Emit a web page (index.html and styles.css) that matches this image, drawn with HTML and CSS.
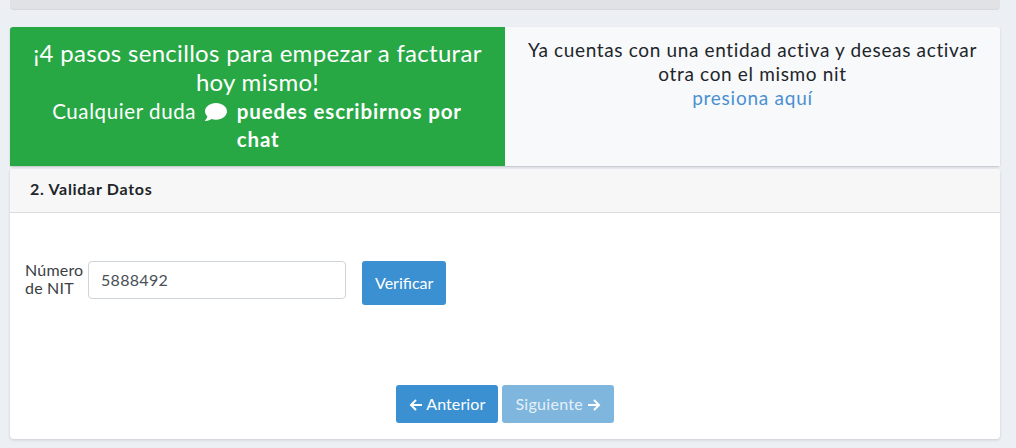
FILE: index.html
```html
<!DOCTYPE html>
<html lang="es">
<head>
<meta charset="utf-8">
<title>Validar Datos</title>
<link rel="stylesheet" href="styles.css">
</head>
<body>
<div class="topbar"></div>
<section class="promo">
  <div class="promo-left">
    <h4 class="promo-title">¡4 pasos sencillos para empezar a facturar hoy mismo!</h4>
    <p class="promo-sub">Cualquier duda
      <svg class="chat-icon" viewBox="0 32 512 448" width="22" height="18" preserveAspectRatio="none" aria-hidden="true"><path fill="#fff" d="M256 32C114.6 32 0 125.1 0 240c0 49.6 21.4 95 57 130.7C44.500 421.100 2.700 466 2.200 466.500c-2.200 2.300-2.800 5.700-1.500 8.700S4.800 480 8 480c66.300 0 116-31.800 140.600-51.400 32.700 12.300 69 19.400 107.400 19.400 141.400 0 256-93.100 256-208S397.400 32 256 32z"/></svg>
      <strong>puedes escribirnos por chat</strong></p>
  </div>
  <div class="promo-right">
    <p class="promo-note">Ya cuentas con una entidad activa y deseas activar otra con el mismo nit</p>
    <a class="promo-link" href="#">presiona aquí</a>
  </div>
</section>
<section class="card">
  <header class="card-header">2. Validar Datos</header>
  <div class="card-body">
    <form class="nit-form">
      <label class="nit-label" for="nit">Número de NIT</label>
      <input class="nit-input" id="nit" type="text" value="5888492">
      <button class="btn verify" type="button">Verificar</button>
    </form>
    <div class="nav-buttons">
      <button class="btn" type="button"><svg class="arrow" viewBox="0 0 14 14" width="14" height="14" aria-hidden="true"><path d="M7 2 2 7l5 5M2 7h11" fill="none" stroke="#fff" stroke-width="2"/></svg> Anterior</button>
      <button class="btn disabled" type="button">Siguiente <svg class="arrow" viewBox="0 0 14 14" width="14" height="14" aria-hidden="true"><path d="m7 2 5 5-5 5M12 7H1" fill="none" stroke="#fff" stroke-width="2"/></svg></button>
    </div>
  </div>
</section>
</body>
</html>
```

FILE: styles.css
```css
* { box-sizing: border-box; }
html, body { margin: 0; height: 448px; overflow: hidden; }
body {
  padding: 0 16px 0 10px;
  background: #ecf0f4;
  font-family: "Lato", "Noto Sans", sans-serif;
  color: #212529;
  font-size: 14px;
}
.topbar {
  height: 10px;
  margin-bottom: 17px;
  background: #e0e2e5;
  border-bottom: 1px solid #d7d9dc;
  border-radius: 0 0 4px 4px;
}
.promo {
  display: grid;
  grid-template-columns: 495px 495px;
  height: 139px;
  border-radius: 3px;
  box-shadow: 0 1px 2px rgba(0,0,0,.2);
}
.promo-left {
  background: #28a745;
  color: #fff;
  text-align: center;
  padding: 11px 15px 0;
  border-radius: 3px 0 0 0;
}
.promo-title {
  margin: 0;
  font-size: 24px;
  line-height: 29px;
  font-weight: 400;
  letter-spacing: .3px;
}
.promo-sub {
  margin: 1px 0 0;
  font-size: 20.5px;
  line-height: 28px;
  font-weight: 400;
  letter-spacing: .6px;
}
.chat-icon { vertical-align: -2px; margin: 0 4px 0 3px; }
.promo-sub strong {
  display: inline-block;
  width: 226px;
  vertical-align: top;
  text-align: left;
  font-weight: 700;
  letter-spacing: .85px;
}
.promo-right {
  background: #f8f9fb;
  text-align: center;
  padding: 11px 15px 0;
  font-size: 19px;
  line-height: 24px;
  letter-spacing: .65px;
  border-radius: 0 3px 0 0;
}
.promo-note { margin: 0; }
.promo-link { color: #4a90d1; text-decoration: none; letter-spacing: .75px; }
.card {
  margin-top: 3px;
  height: 270px;
  background: #fff;
  border-radius: 4px;
  box-shadow: 0 1px 3px rgba(0,0,0,.15);
}
.card-header {
  height: 44px;
  padding: 0 20px 5px;
  display: flex;
  align-items: center;
  background: #f7f7f7;
  border-bottom: 1px solid #dcdcdf;
  border-radius: 4px 4px 0 0;
  font-weight: 700;
  font-size: 16px;
  letter-spacing: .7px;
}
.card-body { padding: 48px 15px 0; }
.nit-form { display: flex; align-items: flex-start; }
.nit-label {
  width: 63px;
  line-height: 18px;
  font-size: 16px;
  letter-spacing: .2px;
  color: #3a3f45;
}
.nit-input {
  width: 258px;
  height: 38px;
  padding: 0 12px 2px;
  border: 1px solid #ced4da;
  border-radius: 4px;
  font: 16px "Lato", sans-serif;
  letter-spacing: .3px;
  color: #495057;
  background: #fff;
}
.btn {
  height: 38px;
  padding: 0 13px 2px;
  border: 0;
  border-radius: 3px;
  background: #3a90d0;
  color: #fff;
  font: 16px "Lato", sans-serif;
  letter-spacing: .1px;
}
.verify { height: 44px; margin-left: 16px; letter-spacing: 0; }
.nav-buttons {
  display: flex;
  justify-content: center;
  gap: 4px;
  margin-top: 80px;
}
.disabled { background: #7fb6de; color: #e6f0f8; letter-spacing: .3px; }
.arrow { vertical-align: -2px; }
```
